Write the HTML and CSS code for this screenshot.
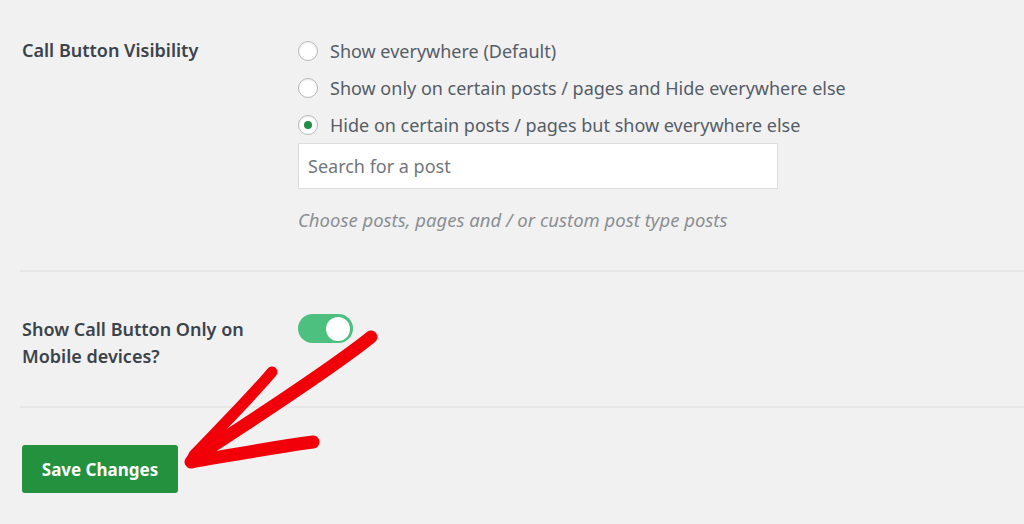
FILE: index.html
```html
<!DOCTYPE html>
<html lang="en">
<head>
<meta charset="utf-8">
<title>Call Button Settings</title>
<link rel="stylesheet" href="styles.css">
</head>
<body>
<div class="page">
  <div class="row row-visibility">
    <div class="label">Call Button Visibility</div>
    <div class="field">
      <label class="radio"><span class="dot"></span><span>Show everywhere (Default)</span></label>
      <label class="radio"><span class="dot"></span><span>Show only on certain posts / pages and Hide everywhere else</span></label>
      <label class="radio"><span class="dot checked"></span><span>Hide on certain posts / pages but show everywhere else</span></label>
      <div class="search">Search for a post</div>
      <p class="desc">Choose posts, pages and / or custom post type posts</p>
    </div>
  </div>
  <div class="row row-mobile">
    <div class="label">Show Call Button Only on Mobile devices?</div>
    <div class="field">
      <span class="toggle"><span class="knob"></span></span>
    </div>
  </div>
  <div class="actions">
    <button class="save">Save Changes</button>
  </div>
</div>
<svg class="arrow" width="1024" height="524" viewBox="0 0 1024 524" aria-hidden="true">
  <g fill="none" stroke="#f2000a" stroke-linecap="round" stroke-linejoin="round">
    <path d="M371 337 C335 366 262 414 194 458" stroke-width="13"/>
    <path d="M272 372 C250 398 220 428 194 455" stroke-width="11"/>
    <path d="M313 442 C275 447 232 455 191 462" stroke-width="13"/>
  </g>
  <circle cx="193" cy="460" r="7" fill="#f2000a"/>
</svg>
</body>
</html>
```
FILE: styles.css
```css
html, body {
  margin: 0;
  padding: 0;
}
body {
  background: #f1f1f1;
  width: 1024px;
  height: 524px;
  overflow: hidden;
  position: relative;
  font-family: "Noto Sans", "Open Sans", sans-serif;
  color: #50575e;
}
.page {
  padding-left: 20px;
}
.row {
  display: grid;
  grid-template-columns: 278px 1fr;
  border-bottom: 2px solid #e6e6e6;
}
.row-visibility {
  padding: 32px 0 38px;
}
.row-mobile {
  padding: 42px 0 36px;
}
.label {
  padding: 5px 20px 0 2px;
  font-size: 18px;
  font-weight: 600;
  line-height: 27px;
  color: #3c434a;
}
.row-mobile .label {
  padding-top: 2px;
}
.field {
  display: flex;
  flex-direction: column;
  align-items: flex-start;
}
.radio {
  display: flex;
  align-items: center;
  gap: 12px;
  height: 37px;
  font-size: 18px;
  color: #555d66;
  white-space: nowrap;
}
.dot {
  width: 18px;
  height: 18px;
  border: 1px solid #b4b9be;
  border-radius: 50%;
  background: #fff;
  box-sizing: content-box;
  display: flex;
  align-items: center;
  justify-content: center;
  box-shadow: inset 0 1px 2px rgba(0,0,0,0.08);
}
.dot.checked::after {
  content: "";
  width: 8px;
  height: 8px;
  border-radius: 50%;
  background: #1e8f45;
}
.search {
  width: 480px;
  height: 46px;
  box-sizing: border-box;
  border: 1px solid #dcdcde;
  background: #fff;
  padding: 0 9px;
  display: flex;
  align-items: center;
  font-size: 18px;
  color: #72777c;
}
.desc {
  margin: 19px 0 0;
  font-size: 18.5px;
  line-height: 24px;
  font-style: italic;
  color: #8c8f94;
}
.toggle {
  width: 55px;
  height: 29px;
  border-radius: 15px;
  background: #4dbf7e;
  display: flex;
  align-items: center;
  justify-content: flex-end;
  padding: 0 3px;
  box-sizing: border-box;
}
.knob {
  width: 24px;
  height: 24px;
  border-radius: 50%;
  background: #fff;
}
.actions {
  padding: 37px 0 0 2px;
}
.save {
  width: 156px;
  height: 48px;
  border: none;
  border-radius: 3px;
  background: #23913d;
  color: #fff;
  font-family: "Noto Sans", "Open Sans", sans-serif;
  font-size: 17px;
  font-weight: 700;
  padding: 0;
}
.arrow {
  position: absolute;
  top: 0;
  left: 0;
  pointer-events: none;
}
```
